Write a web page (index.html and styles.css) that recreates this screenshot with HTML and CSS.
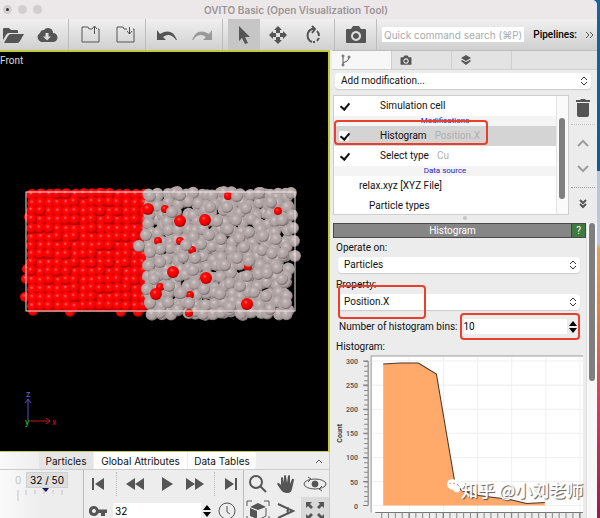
FILE: index.html
```html
<!DOCTYPE html>
<html lang="en">
<head>
    <meta charset="UTF-8">
    <meta name="viewport" content="width=device-width, initial-scale=1.0">
    <title>OVITO Basic (Open Visualization Tool)</title>
    <link rel="stylesheet" href="styles.css">
</head>
<body>
<div class="window">
    <header class="titlebar">
        <div class="lights"><span class="light edited"></span><span class="light"></span><span class="light"></span></div>
        <h1>OVITO Basic (Open Visualization Tool)</h1>
    </header>

    <div class="toolbar">
        <div class="group files">
            <button type="button" aria-label="Open file"><svg width="22" height="18" viewBox="0 0 22 18"><path d="M1 14V3q0-1 1-1h5l2 2h6q1 0 1 1v2H7q-2 0-3 2z"/><path d="M2 17l4-7q1-2 3-2h13l-4 7q-1 2-3 2z"/></svg></button>
            <button type="button" aria-label="Open remote file"><svg width="22" height="18" viewBox="0 0 22 18"><path fill-rule="evenodd" d="M5 16a5 5 0 0 1-1-9 4 4 0 0 1 4-3 5 5 0 0 1 9 3 4.500 4.500 0 0 1 0 9zM9.500 7v3.500H7l4 4 4-4h-2.500V7z"/></svg></button>
        </div>
        <div class="group states">
            <button type="button" aria-label="Load session"><svg class="line" width="20" height="20" viewBox="0 0 20 20"><path d="M12 4H9L8 2H2v15h17V4h-1M14.500 9V1M12 4l2.500-3L17 4"/></svg></button>
            <button type="button" aria-label="Save session"><svg class="line" width="20" height="20" viewBox="0 0 20 20"><path d="M12 4H9L8 2H2v15h17V4h-1M14.500 2v7M12 6l2.500 3L17 6"/></svg></button>
        </div>
        <div class="group history">
            <button type="button" aria-label="Undo"><svg width="22" height="14" viewBox="0 0 22 14"><path d="M1 2v10h9L7 9q7-5 13 3h1Q16-1 4 6z"/></svg></button>
            <button type="button" aria-label="Redo" disabled><svg width="22" height="14" viewBox="0 0 22 14"><path d="M21 2v10h-9l3-3Q8 4 2 12H1Q6-1 18 6z"/></svg></button>
        </div>
        <div class="group modes">
            <button type="button" class="active" aria-label="Select"><svg width="12" height="20" viewBox="0 0 12 20"><path d="M1 1v15l3-3 3 6 3-1-3-6h5z"/></svg></button>
            <button type="button" aria-label="Move"><svg width="20" height="20" viewBox="0 0 20 20"><path d="M10 1l4 4h-2v3H8V5H6zM10 19l4-4h-2v-3H8v3H6zM1 10l4-4v2h3v4H5v2zM19 10l-4-4v2h-3v4h3v2z"/></svg></button>
            <button type="button" aria-label="Rotate"><svg class="bold" width="18" height="20" viewBox="0 0 18 20"><path d="M8 17A7 7 0 0 1 8 4h2M8 1l3 3-3 4"/><path d="M13 6q2 2 2 5M15 13l-2 3M11 17H9" /></svg></button>
        </div>
        <div class="group render">
            <button type="button" aria-label="Render"><svg width="22" height="18" viewBox="0 0 22 18"><path fill-rule="evenodd" d="M2 3h4l2-3h6l2 3h4q1 0 1 1v12q0 1-1 1H2q-1 0-1-1V4q0-1 1-1zM11 5a5 5 0 1 0 .1 0zM11 7a3 3 0 1 1-.1 0z"/></svg></button>
        </div>
        <input class="search" type="text" aria-label="Quick command search" placeholder="Quick command search (⌘P)">
        <span class="pipelines">Pipelines:</span>
        <button type="button" class="more" aria-label="More"><svg class="line" width="10" height="8" viewBox="0 0 10 8"><path d="M1 1l3 3-3 3M5 1l3 3-3 3"/></svg></button>
    </div>

    <main class="workspace">
        <section class="left">
            <div class="viewport">
                <svg viewBox="0 0 328 399" aria-label="Front viewport">
                    <defs>
                        <radialGradient id="red" cx=".4" cy=".35" r=".65">
                            <stop offset="0" stop-color="#ff7070"/>
                            <stop offset=".25" stop-color="#ff0a0a"/>
                            <stop offset=".7" stop-color="#f00000"/>
                            <stop offset="1" stop-color="#9a0000"/>
                        </radialGradient>
                        <radialGradient id="gray" cx=".42" cy=".36" r=".65">
                            <stop offset="0" stop-color="#d6cccc"/>
                            <stop offset=".3" stop-color="#b8acac"/>
                            <stop offset=".75" stop-color="#a99d9d"/>
                            <stop offset="1" stop-color="#706666"/>
                        </radialGradient>
                    </defs>
                    <text class="view-name" x="0" y="12">Front</text>
                    <rect class="bulk" x="28" y="140" width="117" height="120"/>
                    <g id="atoms"></g>
                    <rect class="cell" x="26" y="140" width="269" height="119"/>
                    <g class="axes">
                        <path class="z" d="M28 368V347M25 351l3-4 3 4"/>
                        <path class="x" d="M29 369h21M46 366l4 3-4 3"/>
                        <text class="z" x="26" y="345">z</text>
                        <text class="x" x="52" y="373">x</text>
                        <text class="y" x="25" y="373">y</text>
                    </g>
                </svg>
            </div>

            <nav class="data-tabs">
                <button type="button" class="first">Particles</button>
                <button type="button">Global Attributes</button>
                <button type="button" class="last">Data Tables</button>
                <button type="button" class="collapse" aria-label="Collapse"><svg class="line" width="8" height="6" viewBox="0 0 8 6"><path d="M1 5l3-3 3 3"/></svg></button>
            </nav>

            <div class="controls">
                <div class="timeline">
                    <span class="start">0</span>
                    <button type="button" class="frame">32 / 50</button>
                    <svg class="ticks" width="64" height="16" viewBox="0 0 64 16"><path class="tick" d="M9 2v11M17 2v5M26 2v4M35 2v4M44 2v4M53 2v5"/><path class="marker" d="M33 0h7l-3 4z"/></svg>
                </div>
                <div class="playback">
                    <div class="row">
                        <button type="button" aria-label="First frame"><svg width="14" height="12" viewBox="0 0 14 12"><path d="M1 0h2v12H1zM13 0v12L4 6z"/></svg></button>
                        <button type="button" class="dotted" aria-label="Previous frame"><svg width="20" height="12" viewBox="0 0 20 12"><path d="M10 0v12L1 6zM19 0v12l-9-6z"/></svg></button>
                        <button type="button" aria-label="Play"><svg width="12" height="14" viewBox="0 0 12 14"><path d="M1 0l11 7-11 7z"/></svg></button>
                        <button type="button" aria-label="Next frame"><svg width="20" height="12" viewBox="0 0 20 12"><path d="M1 0v12l9-6zM10 0v12l9-6z"/></svg></button>
                        <button type="button" class="dotted" aria-label="Last frame"><svg width="14" height="12" viewBox="0 0 14 12"><path d="M11 0h2v12h-2zM1 0v12l9-6z"/></svg></button>
                    </div>
                    <div class="row">
                        <button type="button" aria-label="Auto key"><svg width="18" height="10" viewBox="0 0 18 10"><path fill-rule="evenodd" d="M5 0a5 5 0 1 0 4.500 7H12v3h4V7h2V3.500H9.500A5 5 0 0 0 5 0zM5 3a2 2 0 1 1-.1 0z"/></svg></button>
                        <div class="spin">
                            <input type="text" aria-label="Current frame" value="32">
                            <svg class="spin-arrows" width="8" height="12" viewBox="0 0 8 12"><path d="M0 5l4-5 4 5zM0 7h8l-4 5z"/></svg>
                        </div>
                        <button type="button" aria-label="Animation settings"><svg class="line" width="18" height="18" viewBox="0 0 18 18"><circle cx="9" cy="9" r="8"/><path d="M9 4v6l3 2"/></svg></button>
                    </div>
                </div>
                <div class="view-tools">
                    <button type="button" aria-label="Zoom"><svg class="bold" width="20" height="20" viewBox="0 0 20 20"><circle cx="8" cy="8" r="6"/><path d="M12 12l6 6"/></svg></button>
                    <button type="button" aria-label="Pan"><svg width="18" height="20" viewBox="0 0 18 20"><path d="M4 11V4q1-2 2 0l1 5V2q1-2 2 0l1 7 1-7q1-2 2 0v8l2-5q2-1 2 1l-2 9q-1 4-4 4H9q-3 0-5-3l-4-6q1-2 3 0z"/></svg></button>
                    <button type="button" aria-label="Orbit"><svg class="line" width="24" height="18" viewBox="0 0 24 18"><ellipse cx="12" cy="9" rx="11" ry="5"/><path d="M5 2l3 2-3 3M19 11l-3 3 3 2"/><circle class="solid" cx="12" cy="9" r="3"/></svg></button>
                    <button type="button" aria-label="Zoom scene extents"><svg width="24" height="22" viewBox="0 0 24 22"><path class="outline" d="M1 6V1h5M18 1h5v5M1 16v5h5M18 21h5v-5"/><path d="M4 7l8-4 8 4-8 3zM4 8l7 3v8l-7-3z"/><path class="outline" d="M20 8v8l-8 4"/></svg></button>
                    <button type="button" aria-label="Field of view"><svg class="bold" width="18" height="18" viewBox="0 0 18 18"><path d="M1 2l15 7-15 7M12 6q-3 3 0 6"/></svg></button>
                    <button type="button" class="active" aria-label="Maximize"><svg width="20" height="20" viewBox="0 0 20 20"><path d="M1 1h6L5 3l3 3-2 2-3-3-2 2zM19 1h-6l2 2-3 3 2 2 3-3 2 2zM1 19h6l-2-2 3-3-2-2-3 3-2-2zM19 19h-6l2-2-3-3 2-2 3 3 2-2z"/></svg></button>
                </div>
            </div>
        </section>

        <aside class="right">
            <nav class="panel-tabs">
                <button type="button" class="active" aria-label="Pipelines"><svg class="line" width="10" height="13" viewBox="0 0 10 13"><circle cx="2" cy="2" r="1"/><circle cx="2" cy="11" r="1"/><circle cx="8" cy="3" r="1"/><path d="M2 3v7M8 4q0 3-6 5"/></svg></button>
                <button type="button" aria-label="Rendering"><svg width="12" height="11" viewBox="0 0 22 18"><path fill-rule="evenodd" d="M2 3h4l2-3h6l2 3h4q1 0 1 1v12q0 1-1 1H2q-1 0-1-1V4q0-1 1-1zM11 5a5 5 0 1 0 .1 0zM11 7a3 3 0 1 1-.1 0z"/></svg></button>
                <button type="button" aria-label="Overlays"><svg width="10" height="10" viewBox="0 0 10 10"><path d="M5 0l5 3-5 3-5-3zM0 6l1-1 4 2 4-2 1 1-5 4z"/></svg></button>
            </nav>

            <div class="pipeline">
                <div class="select">
                    <select aria-label="Add modification"><option>Add modification...</option></select>
                    <svg class="updown" width="8" height="10" viewBox="0 0 8 10"><path d="M1 4l3-3 3 3M1 6l3 3 3-3"/></svg>
                </div>
                <div class="pipeline-body">
                    <div class="list">
                        <ul>
                            <li><label><input type="checkbox" checked>Simulation cell</label></li>
                            <li class="heading">Modifications</li>
                            <li class="selected"><label><input type="checkbox" checked>Histogram</label><small>Position.X</small><span class="mark mark-row"></span></li>
                            <li><label><input type="checkbox" checked>Select type</label><small>Cu</small></li>
                            <li class="heading">Data source</li>
                            <li class="source">relax.xyz [XYZ File]</li>
                            <li class="child">Particle types</li>
                        </ul>
                        <div class="track"><div class="thumb"></div></div>
                    </div>
                    <div class="actions">
                        <button type="button" aria-label="Delete"><svg width="16" height="18" viewBox="0 0 16 18"><path d="M1 1h4l1-1h4l1 1h4v2H1zM2 4h12v12q0 2-2 2H4q-2 0-2-2z"/></svg></button>
                        <button type="button" class="ruled" aria-label="Move up" disabled><svg class="bold" width="12" height="8" viewBox="0 0 12 8"><path d="M1 7l5-5 5 5"/></svg></button>
                        <button type="button" aria-label="Move down" disabled><svg class="bold" width="12" height="8" viewBox="0 0 12 8"><path d="M1 1l5 5 5-5"/></svg></button>
                        <button type="button" class="ruled last" aria-label="More actions"><svg class="bold" width="8" height="10" viewBox="0 0 8 10"><path d="M1 1l3 3 3-3M1 5l3 3 3-3"/></svg></button>
                    </div>
                </div>
                <div class="splitter"></div>
            </div>

            <div class="properties">
                <div class="rollup">
                    <div class="rollup-head">
                        <h2>Histogram</h2>
                        <button type="button" aria-label="Help">?</button>
                    </div>
                    <form>
                        <label for="operate">Operate on:</label>
                        <div class="select">
                            <select id="operate"><option>Particles</option></select>
                            <svg class="updown" width="8" height="10" viewBox="0 0 8 10"><path d="M1 4l3-3 3 3M1 6l3 3 3-3"/></svg>
                        </div>
                        <label for="property">Property:</label>
                        <div class="select">
                            <select id="property"><option>Position.X</option></select>
                            <svg class="updown" width="8" height="10" viewBox="0 0 8 10"><path d="M1 4l3-3 3 3M1 6l3 3 3-3"/></svg>
                            <span class="mark mark-property"></span>
                        </div>
                        <div class="bins">
                            <label for="bins">Number of histogram bins:</label>
                            <div class="spin">
                                <input id="bins" type="text" value="10">
                                <svg class="spin-arrows" width="8" height="12" viewBox="0 0 8 12"><path d="M0 5l4-5 4 5zM0 7h8l-4 5z"/></svg>
                                <span class="mark mark-bins"></span>
                            </div>
                        </div>
                        <p class="chart-title">Histogram:</p>
                    </form>
                    <div class="chart">
                        <svg viewBox="0 0 252 180" aria-label="Histogram of Position.X">
                            <path class="plot" d="M38 3h211v156H38z"/>
                            <path class="frame-line" d="M38 159V3h211"/>
                            <path class="grid" d="M76 4v154M110 4v154M144 4v154M178 4v154M212 4v154M246 4v154M39 8h210M39 32h210M39 56h210M39 80h210M39 104h210M39 128h210M39 152h210"/>
                            <path class="area" d="M50 152V11L67 10H85L103 21 121 127 128 137 145 142 176 146 193 150 211 149V152z"/>
                            <path class="curve" d="M50 11L67 10H85L103 21 121 127 128 137 145 142 176 146 193 150 211 149"/>
                            <path class="axis" d="M35 8v144M30 8h5M30 32h5M30 56h5M30 80h5M30 104h5M30 128h5M30 152h5M42 159h207M76 159v10M110 159v10M144 159v10M178 159v10M212 159v10M246 159v10"/>
                            <path class="minor-y" d="M33 8v144"/>
                            <path class="minor-x" d="M48 162h201"/>
                            <g class="y-labels">
                                <text x="25" y="11">300</text>
                                <text x="25" y="35">250</text>
                                <text x="25" y="59">200</text>
                                <text x="25" y="83">150</text>
                                <text x="25" y="107">100</text>
                                <text x="25" y="131">50</text>
                                <text x="25" y="155">0</text>
                            </g>
                            <text class="y-title" transform="rotate(-90 9 80)" x="9" y="80">Count</text>
                        </svg>
                        <div class="watermark">
                            <svg width="16" height="16" viewBox="0 0 16 16"><circle cx="6" cy="6" r="6"/><circle cx="11" cy="11" r="4"/><circle class="eye" cx="4" cy="5" r="1"/><circle class="eye" cx="8" cy="5" r="1"/></svg>
                            <span>知乎 @小刘老师</span>
                        </div>
                    </div>
                </div>
                <div class="scroll"><div class="thumb"></div></div>
            </div>
        </aside>
    </main>
</div>
<script src="atoms.js"></script>
</body>
</html>
```
FILE: styles.css
```css
* {
    box-sizing: border-box;
}
body {
    margin: 0;
    height: 100vh;
    overflow: hidden;
    padding-right: 3px;
    background: linear-gradient(#17649f 0, #0d5c98 33%, #b3c6e3 33%, #b9c8df 47%, #e5a04c 48%, #e0803c 60%, #d2405a 78%, #9c1750 100%);
    font-family: Roboto, "Liberation Sans", sans-serif;
    font-size: 10px;
    line-height: 12px;
    color: #111;
}
button, input, select {
    font: inherit;
    color: inherit;
    margin: 0;
    padding: 0;
    border: 0;
    background: none;
}
button {
    display: flex;
    align-items: center;
    justify-content: center;
}
svg {
    display: block;
    flex: none;
    fill: #555;
}
svg.line, svg.bold, .outline {
    fill: none;
    stroke: #555;
}
svg.bold {
    stroke-width: 2;
}
.solid {
    fill: #555;
}
.window {
    display: flex;
    flex-direction: column;
    height: 100%;
    overflow: hidden;
    background: #ededed;
    border-radius: 0 5px 0 0;
}

/* title bar and toolbar */
.titlebar {
    display: flex;
    align-items: center;
    height: 19px;
    flex: none;
    background: #ece7e8;
}
.titlebar h1 {
    flex: 1;
    margin: 0 47px 0 0;
    text-align: center;
    font-family: Inter, "Liberation Sans", sans-serif;
    font-size: 10px;
    font-weight: 600;
    color: #9b9597;
}
.lights {
    display: flex;
    gap: 6px;
    padding-left: 3px;
}
.light {
    width: 9px;
    height: 9px;
    border-radius: 50%;
    background: #d2cdce;
}
.edited {
    border: 3px solid #d2cdce;
    background: #333;
}
.toolbar {
    display: flex;
    align-items: center;
    height: 31px;
    flex: none;
    background: linear-gradient(#f1f0f0, #d0d0d0);
}
.group {
    display: flex;
    height: 31px;
    border-right: 1px solid #bdbdbd;
}
.group button {
    width: 35px;
}
.files {
    width: 69px;
}
.files button:first-child {
    width: 26px;
}
.files button:last-child {
    width: 43px;
}
.states, .history, .modes {
    width: 77px;
    padding: 0 3px;
}
.modes {
    width: 112px;
    padding: 0 0 0 5px;
}
.modes .active {
    width: 32px;
    background: #c6c6c6;
}
.render {
    width: 42px;
}
.render button {
    flex: 1;
}
button:disabled {
    opacity: .5;
}
.search {
    flex: 1;
    min-width: 0;
    height: 15px;
    margin: 0 9px 0 5px;
    padding: 0 2px;
    background: #fff;
    font-family: Inter, "Liberation Sans", sans-serif;
}
.search::placeholder {
    color: #aaa;
    opacity: 1;
}
.pipelines {
    font-weight: 500;
    color: #000;
}
.more {
    width: 20px;
    padding-left: 5px;
}

/* main area */
.workspace {
    flex: 1;
    min-height: 0;
    display: grid;
    grid-template-columns: 1fr 267px;
}
.left, .right {
    min-width: 0;
    min-height: 0;
    display: flex;
    flex-direction: column;
}
.viewport {
    flex: 1;
    min-height: 0;
    background: #000;
    border: solid #c3cb3d;
    border-width: 2px 2px 1px 0;
}
.viewport svg {
    width: 100%;
    height: 100%;
}
.view-name {
    fill: #ddd;
    font-size: 10px;
}
.bulk {
    fill: #c40000;
}
.cell {
    fill: none;
    stroke: #f0e4e4;
}
.axes {
    font-size: 9px;
}
.axes path {
    fill: none;
}
path.x { stroke: #c8141e; }
path.z { stroke: #5a50c8; }
text.x { fill: #c8141e; }
text.y { fill: #32d232; }
text.z { fill: #6e64c8; }

.data-tabs {
    display: flex;
    height: 18px;
    flex: none;
    padding-left: 39px;
    border-bottom: 1px solid #ccc;
    border-right: 1px solid #ccc;
    background: linear-gradient(90deg, #fafafa, #ededed 40px);
    font-family: Inter, "Liberation Sans", sans-serif;
}
.data-tabs button {
    width: 94px;
    background: #fff;
    border-right: 1px solid #eee;
}
.data-tabs .first {
    width: 55px;
    background: #e5e5e5;
}
.data-tabs .last {
    width: 69px;
    border-radius: 0 4px 4px 0;
}
.data-tabs .collapse {
    width: 20px;
    margin-left: auto;
    background: none;
    border: 0;
}
.controls {
    display: flex;
    height: 48px;
    flex: none;
    overflow: hidden;
    border-right: 1px solid #ccc;
    font-family: Inter, "Liberation Sans", sans-serif;
}
.timeline {
    display: grid;
    grid-template-columns: 26px 42px;
    grid-template-rows: 18px 20px;
    width: 84px;
    border-right: 1px solid #bbb;
    background: linear-gradient(90deg, #fbfbfb, #ededed 40px);
}
.start {
    padding: 4px 0 0 15px;
    color: #c0c0ce;
}
.frame {
    margin-top: 2px;
    background: #dedede;
    border: 1px solid #d0d0d0;
    color: #000;
}
.ticks {
    grid-column: 1 / 3;
    margin-left: 9px;
}
.tick {
    fill: none;
    stroke: #c2c2d0;
}
.marker {
    fill: #151560;
}
.playback {
    flex: 1;
    min-width: 0;
}
.row {
    display: flex;
    align-items: center;
    height: 27px;
    padding-left: 4px;
}
.row button {
    width: 29px;
    height: 24px;
}
.row button:first-child {
    width: 20px;
}
.row .dotted {
    width: 38px;
    border-left: 1px dotted #bbb;
    margin-left: 8px;
}
.row .dotted:last-child {
    width: 30px;
    margin-left: 4px;
    padding-left: 4px;
}
.spin {
    position: relative;
    display: flex;
    align-items: center;
    flex: 1;
    min-width: 0;
    gap: 2px;
}
.spin input {
    flex: 1;
    min-width: 0;
    height: 15px;
    background: #fff;
    color: #000;
}
.row .spin {
    margin-left: 5px;
}
.row .spin + button {
    width: 32px;
}
.row .spin input {
    padding-left: 2px;
}
.spin-arrows {
    fill: #000;
}
.view-tools {
    display: grid;
    grid-template-columns: repeat(3, 1fr);
    grid-template-rows: 27px 27px;
    width: 86px;
    border-left: 1px solid #bbb;
}
.view-tools .active {
    background: #dadada;
}

/* command panel */
.right {
    background: #ececec;
    padding-left: 2px;
}
.panel-tabs {
    display: flex;
    height: 20px;
    flex: none;
    background: #e3e3e3;
    border-top: 1px solid #bcbcbc;
    border-bottom: 1px solid #d0d0d0;
}
.panel-tabs button {
    width: 60px;
    padding-right: 32px;
    border-right: 1px solid #cfcfcf;
}
.panel-tabs .active {
    background: #f7f7f7;
}
.select {
    position: relative;
    display: flex;
    align-items: center;
    height: 16px;
    background: #fff;
    border-radius: 4px;
    box-shadow: 0 1px 1px #ccc;
}
.select select {
    appearance: none;
    flex: 1;
    height: 16px;
    padding-left: 6px;
}
.updown {
    margin-right: 3px;
    fill: none;
    stroke: #333;
}
.pipeline {
    flex: none;
}
.pipeline > .select {
    margin: 3px 6px 6px 3px;
}
.pipeline-body {
    display: flex;
}
.list {
    flex: 1;
    display: flex;
    height: 120px;
    margin-left: 1px;
    overflow: hidden;
    border: 1px solid #cfcfcf;
    background: #fff;
}
.list ul {
    flex: 1;
    margin: 0;
    padding: 0;
    list-style: none;
}
.list li {
    position: relative;
    display: flex;
    align-items: center;
    height: 20px;
}
.list label {
    display: flex;
    align-items: center;
}
.list input {
    appearance: none;
    width: 10px;
    height: 10px;
    margin: 0 31px 0 5px;
    background: #fff;
    border-radius: 2px;
}
.list input:checked::before {
    content: "";
    display: block;
    width: 4px;
    height: 7px;
    margin: 0 0 0 3px;
    border: solid #111;
    border-width: 0 2px 2px 0;
    transform: rotate(40deg);
}
.list small {
    margin-left: 8px;
    font-size: 10px;
    color: #b0b0b0;
}
.list .heading {
    height: 10px;
    justify-content: center;
    background: #f4f4f4;
    font-size: 8px;
    line-height: 10px;
    color: #2a22c8;
}
.list .selected {
    background: #d4d4d4;
}
.list .source {
    padding-left: 25px;
}
.list .child {
    padding-left: 35px;
}
.track {
    width: 12px;
    padding: 22px 3px 0 2px;
    border-left: 1px solid #e4e4e4;
    background: #fafafa;
}
.thumb {
    height: 81px;
    border-radius: 3px;
    background: #7f7f7f;
}
.actions {
    display: flex;
    flex-direction: column;
    width: 24px;
    margin: 0 2px 0 2px;
}
.actions button {
    flex: none;
    height: 26px;
}
.actions .ruled {
    height: 32px;
    margin-top: 3px;
    border-top: 1px dotted #999;
    padding-top: 4px;
}
.actions .last {
    height: 28px;
    margin-top: 5px;
}
.splitter {
    width: 4px;
    height: 4px;
    margin: 1px auto 3px;
    border-radius: 50%;
    background: #c6c6c6;
}
.properties {
    flex: 1;
    min-height: 0;
    overflow: hidden;
    display: flex;
}
.rollup {
    flex: 1;
    min-width: 0;
    padding-left: 1px;
}
.rollup-head {
    display: flex;
    height: 15px;
    border: 1px solid #4a4a4a;
    background: #868686;
    color: #fff;
}
.rollup-head h2 {
    flex: 1;
    margin: 0;
    text-align: center;
    font-size: 10px;
    font-weight: 400;
    line-height: 13px;
}
.rollup-head button {
    width: 14px;
    background: #3f7a41;
    border-left: 1px solid #2c4c2c;
}
.rollup form {
    padding: 3px 6px 0 3px;
}
.rollup form > label, .chart-title {
    display: block;
    margin: 0;
    line-height: 13px;
}
.rollup form > .select {
    margin: 3px 0 5px 2px;
}
.bins {
    display: flex;
    align-items: center;
    height: 23px;
    padding: 0 3px;
    gap: 6px;
}
.chart-title {
    padding-top: 2px;
}
.mark {
    position: absolute;
    border: 2px solid #e8402a;
    border-radius: 4px;
    pointer-events: none;
}
.mark-row {
    inset: -6px auto 1px 0;
    width: 154px;
}
.mark-property {
    inset: -9px auto -9px 0;
    width: 88px;
}
.mark-bins {
    inset: -6px -3px -6px -4px;
}
.scroll {
    width: 11px;
    padding: 0 2px;
    border-left: 1px solid #ddd;
    background: #f8f8f8;
}
.scroll .thumb {
    width: 6px;
    height: 158px;
}

/* histogram plot */
.chart {
    position: relative;
}
.chart > svg {
    width: 100%;
}
.plot { fill: #fff; }
.frame-line { fill: none; stroke: #999; }
.grid { fill: none; stroke: #f0f0f0; }
.area { fill: #ffa96b; }
.curve { fill: none; stroke: #4a3526; }
.axis { fill: none; stroke: #777; }
.minor-y, .minor-x {
    fill: none;
    stroke: #888;
    stroke-width: 4;
    stroke-dasharray: 1 3.8;
}
.minor-x {
    stroke-width: 6;
    stroke-dasharray: 1 5.8;
}
.y-labels, .y-title {
    font-size: 7px;
    font-weight: 600;
    fill: #555;
}
.y-labels {
    text-anchor: end;
}
.y-title {
    text-anchor: middle;
    fill: #333;
}
.watermark {
    position: absolute;
    left: 114px;
    top: 125px;
    display: flex;
    font: 500 17px/24px "Noto Sans CJK SC", sans-serif;
    color: #fff;
    text-shadow: 1px 1px 1px #555;
    white-space: nowrap;
}
.watermark svg {
    width: 14px;
    fill: #fff;
}
.watermark .eye {
    fill: #e9a36f;
}
```
FILE: atoms.js
```javascript
const atoms = document.getElementById('atoms');
let seed = 7;

function rand() {
    seed = (seed * 16807) % 2147483647;
    return seed / 2147483647;
}

function ball(x, y, r, kind) {
    const c = document.createElementNS('http://www.w3.org/2000/svg', 'circle');
    c.setAttribute('cx', x);
    c.setAttribute('cy', y);
    c.setAttribute('r', r);
    c.setAttribute('fill', `url(#${kind})`);
    atoms.appendChild(c);
}

// atoms sticking out of the crystal
[[27, 217], [26, 227], [25, 245], [29, 165], [33, 259], [70, 260], [121, 260], [138, 260]].forEach(p => ball(p[0], p[1], 5, 'red'));

// crystalline half: regular lattice, back layer then a sparser front layer
for (let layer = 0; layer < 2; layer++) {
    for (let y = 142; y < 260; y += 8.6) {
        for (let x = 32; x < 145; x += 8.6) {
            if (layer === 1 && rand() < 0.55) continue;
            ball(x + rand() - layer, y + rand() - layer, layer ? 5.4 : 5.8, 'red');
        }
    }
}

// amorphous half, back layers
for (let layer = 0; layer < 2; layer++) {
    for (let y = 143; y < 262; y += 9) {
        for (let x = 151; x < 292; x += 9) {
            ball(x + rand() * 6 - 3, y + rand() * 6 - 3, 6, 'gray');
        }
    }
}
[[228, 144], [165, 157], [278, 159], [158, 189], [180, 189], [192, 198], [248, 215], [160, 235], [190, 243], [189, 261]].forEach(p => ball(p[0], p[1], 4, 'red'));

// amorphous half, front layer
const front = [
    [150, 144], [180, 143], [259, 141], [291, 141], [271, 150], [172, 160], [217, 169], [227, 155], [210, 155], [246, 156],
    [236, 168], [228, 177], [209, 183], [221, 187], [249, 180], [263, 184], [276, 187], [186, 193], [201, 192], [146, 183],
    [139, 194], [160, 197], [150, 200], [244, 195], [183, 205], [195, 206], [237, 206], [249, 209], [262, 198], [272, 201],
    [283, 201], [295, 204], [160, 210], [193, 218], [225, 213], [247, 224], [267, 221], [277, 216], [282, 227], [240, 234],
    [254, 240], [266, 244], [169, 234], [181, 241], [204, 237], [147, 237], [154, 227], [189, 251], [220, 242], [230, 255],
    [237, 144], [287, 155], [282, 168], [292, 163], [293, 176], [294, 189], [286, 251], [270, 257], [150, 251]
];
front.forEach(p => ball(p[0], p[1], 6, 'gray'));
[[148, 157], [180, 169], [205, 168], [173, 220], [206, 226], [156, 242], [247, 252]].forEach(p => ball(p[0], p[1], 6, 'red'));
```
